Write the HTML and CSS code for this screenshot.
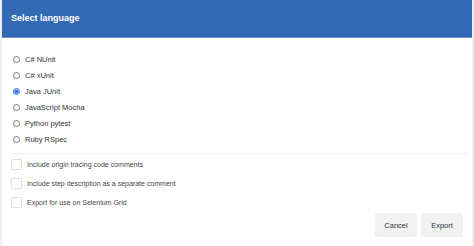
FILE: index.html
```html
<!DOCTYPE html>
<html lang="en">
<head>
  <meta charset="UTF-8">
  <title>Select language</title>
  <link rel="stylesheet" href="styles.css">
</head>
<body>
  <div class="dialog">
    <div class="dialog-header">Select language</div>

    <div class="dialog-body">
      <div class="languages">
        <label class="option"><input type="radio" name="lang"> C# NUnit</label>
        <label class="option"><input type="radio" name="lang"> C# xUnit</label>
        <label class="option"><input type="radio" name="lang" checked> Java JUnit</label>
        <label class="option"><input type="radio" name="lang"> JavaScript Mocha</label>
        <label class="option"><input type="radio" name="lang"> Python pytest</label>
        <label class="option"><input type="radio" name="lang"> Ruby RSpec</label>
      </div>

      <div class="settings">
        <label class="check"><span class="box"></span> Include origin tracing code comments</label>
        <label class="check"><span class="box"></span> Include step description as a separate comment</label>
        <label class="check"><span class="box"></span> Export for use on Selenium Grid</label>
      </div>
    </div>

    <div class="dialog-footer">
      <button class="btn">Cancel</button>
      <button class="btn">Export</button>
    </div>
  </div>
</body>
</html>
```

FILE: styles.css
```css
html, body {
  margin: 0;
  padding: 0;
}

body {
  font-family: "Liberation Sans", Arial, sans-serif;
  background: #fff;
  color: #333;
  width: 474px;
  height: 246px;
  overflow: hidden;
}

.dialog {
  height: 246px;
  border-left: 2px solid #eeeef6;
  border-right: 2px solid #e8eef6;
  box-sizing: border-box;
  display: flex;
  flex-direction: column;
}

.dialog-header {
  height: 36px;
  background: #336ab5;
  border-bottom: 1px solid #2c5fa6;
  box-shadow: 0 1px 0 #6d97d1;
  color: #fff;
  font-weight: bold;
  font-size: 9px;
  padding-left: 9px;
  line-height: 37px;
}

.dialog-body {
  padding: 16px 0 0 8px;
  flex: 1;
}

.languages {
  display: flex;
  flex-direction: column;
  gap: 4px;
  padding-bottom: 8px;
  border-bottom: 1px solid #eef0f2;
  margin-right: 4px;
}

.option {
  display: flex;
  align-items: center;
  height: 12px;
  font-size: 7.5px;
  color: #333;
}

.option input {
  width: 7px;
  height: 7px;
  margin: 0 5px 0 3px;
  accent-color: #2f6fd6;
}

.settings {
  display: flex;
  flex-direction: column;
  gap: 8px;
  padding-top: 5px;
}

.check {
  display: flex;
  align-items: center;
  font-size: 7px;
  color: #444;
  height: 11px;
}

.box {
  width: 9px;
  height: 9px;
  border: 1px solid #e2e2e2;
  border-radius: 1px;
  margin: 0 5px 0 1px;
  background: #fff;
}

.dialog-footer {
  display: flex;
  justify-content: flex-end;
  gap: 4px;
  padding: 0 9px 9px 0;
}

.btn {
  font-family: inherit;
  font-size: 7.5px;
  color: #333;
  background: #f2f2f2;
  border: none;
  border-radius: 2px;
  width: 42px;
  height: 24px;
  padding: 0;
}
```
